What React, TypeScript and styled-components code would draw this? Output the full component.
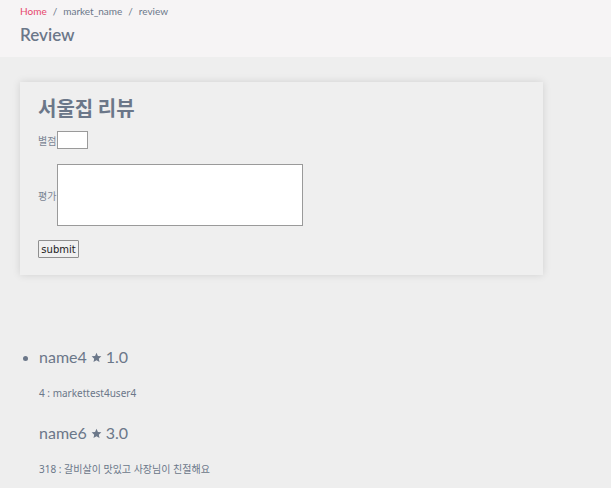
import React from "react";
import styled, { createGlobalStyle } from "styled-components";

const GlobalStyle = createGlobalStyle`
  html, body {
    margin: 0;
    padding: 0;
    background: #eeeeee;
  }
  body {
    font-family: "Lato", "Noto Sans CJK KR", sans-serif;
    color: #6b7789;
  }
`;

const Page = styled.div`
  min-height: 488px;
  background: #eeeeee;
`;

const Header = styled.header`
  height: 57px;
  box-sizing: border-box;
  padding: 5px 20px 0;
  background: #f6f4f5;
`;

const Crumbs = styled.div`
  display: flex;
  gap: 6px;
  font-size: 10px;
  line-height: 12px;
  color: #6b7789;
`;

const CrumbLink = styled.a`
  color: #e6466b;
  text-decoration: none;
`;

const PageTitle = styled.h2`
  margin: 8px 0 0;
  font-size: 17px;
  font-weight: 600;
  line-height: 20px;
  color: #6b7789;
`;

const Main = styled.main`
  padding: 25px 68px 0 20px;
`;

const Card = styled.section`
  width: 523px;
  box-sizing: border-box;
  padding: 14px 18px 17px;
  background: #efefef;
  box-shadow: 0 0 8px rgba(0, 0, 0, 0.12);
`;

const CardTitle = styled.h3`
  margin: 0 0 11px;
  font-size: 20px;
  line-height: 24px;
  font-weight: 600;
  font-family: "Noto Sans CJK KR", sans-serif;
  color: #6b7789;
`;

const Field = styled.label`
  display: flex;
  align-items: center;
  margin-bottom: 15px;
  font-size: 10px;
  font-family: "Noto Sans CJK KR", sans-serif;
  color: #7b8594;
`;

const ScoreInput = styled.input`
  width: 31px;
  height: 18px;
  box-sizing: border-box;
  margin: 0 0 0 1px;
  border: 1px solid #9a9a9a;
  background: #fff;
`;

const Comment = styled.textarea`
  width: 246px;
  height: 62px;
  box-sizing: border-box;
  margin: 0 0 0 1px;
  border: 1px solid #9a9a9a;
  background: #fff;
  resize: none;
`;

const Submit = styled.button`
  display: block;
  width: 41px;
  height: 18px;
  padding: 0;
  margin-top: -1px;
  border: 1px solid #8f8f8f;
  border-radius: 1px;
  background: #f0f0f0;
  font-family: "DejaVu Sans", sans-serif;
  font-size: 10px;
  color: #222;
`;

const Reviews = styled.ul`
  margin: 72px 0 0;
  padding: 0 0 0 19px;
  list-style: disc;
  font-size: 14px;
  color: #6b7789;
`;

const ReviewItem = styled.li``;

const Entry = styled.div`
  margin-bottom: 23px;
`;

const NameRow = styled.div`
  display: flex;
  align-items: center;
  gap: 4px;
  font-size: 16px;
  line-height: 20px;
  height: 20px;
`;

const Body = styled.p`
  margin: 19px 0 0;
  font-size: 10px;
  line-height: 14px;
  font-family: "Noto Sans", "Noto Sans CJK KR", sans-serif;
  color: #6b7789;
`;

const StarIcon = () => (
  <svg width="11" height="11" viewBox="0 0 24 24" fill="#6b7789">
    <path d="M12 1.8l3.1 6.9 7.5.8-5.6 5.1 1.6 7.4L12 18.2 5.4 22l1.6-7.4L1.4 9.5l7.5-.8z" />
  </svg>
);

const reviews = [
  { name: "name4", score: "1.0", id: 4, text: "markettest4user4" },
  { name: "name6", score: "3.0", id: 318, text: "갈비살이 맛있고 사장님이 친절해요" },
];

export default function App() {
  return (
    <Page>
      <GlobalStyle />
      <Header>
        <Crumbs>
          <CrumbLink href="#">Home</CrumbLink>
          <span>/</span>
          <span>market_name</span>
          <span>/</span>
          <span>review</span>
        </Crumbs>
        <PageTitle>Review</PageTitle>
      </Header>
      <Main>
        <Card>
          <CardTitle>서울집 리뷰</CardTitle>
          <Field>
            별점
            <ScoreInput type="text" />
          </Field>
          <Field>
            평가
            <Comment />
          </Field>
          <Submit type="button">submit</Submit>
        </Card>
        <Reviews>
          <ReviewItem>
            {reviews.map((r) => (
              <Entry key={r.id}>
                <NameRow>
                  <span>{r.name}</span>
                  <StarIcon />
                  <span>{r.score}</span>
                </NameRow>
                <Body>
                  {r.id} : {r.text}
                </Body>
              </Entry>
            ))}
          </ReviewItem>
        </Reviews>
      </Main>
    </Page>
  );
}
